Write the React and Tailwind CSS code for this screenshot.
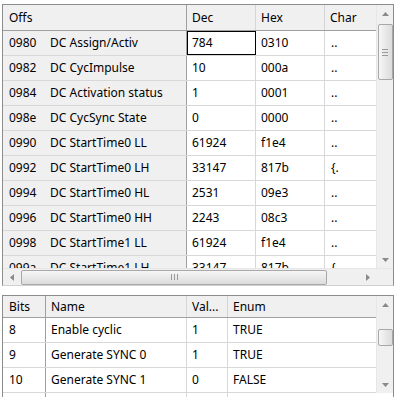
import React from "react";

const FONT = { fontFamily: '"Noto Sans", "Open Sans", sans-serif' };

const topRows = [
  ["0980", "DC Assign/Activ", "784", "0310", ".."],
  ["0982", "DC CycImpulse", "10", "000a", ".."],
  ["0984", "DC Activation status", "1", "0001", ".."],
  ["098e", "DC CycSync State", "0", "0000", ".."],
  ["0990", "DC StartTime0 LL", "61924", "f1e4", ".."],
  ["0992", "DC StartTime0 LH", "33147", "817b", "{."],
  ["0994", "DC StartTime0 HL", "2531", "09e3", ".."],
  ["0996", "DC StartTime0 HH", "2243", "08c3", ".."],
  ["0998", "DC StartTime1 LL", "61924", "f1e4", ".."],
  ["099a", "DC StartTime1 LH", "33147", "817b", "{."],
];

const botRows = [
  ["8", "Enable cyclic", "1", "TRUE"],
  ["9", "Generate SYNC 0", "1", "TRUE"],
  ["10", "Generate SYNC 1", "0", "FALSE"],
  ["11", "Reserved", "0", "FALSE"],
];

function Tri({ dir }) {
  const paths = {
    up: "M0 4 L3.5 0 L7 4 Z",
    down: "M0 0 L7 0 L3.5 4 Z",
  };
  if (dir === "left" || dir === "right") {
    return (
      <svg width="4" height="7" viewBox="0 0 4 7">
        <path d={dir === "left" ? "M4 0 L0 3.5 L4 7 Z" : "M0 0 L4 3.5 L0 7 Z"} fill="#8a8a8a" />
      </svg>
    );
  }
  return (
    <svg width="7" height="4" viewBox="0 0 7 4">
      <path d={paths[dir]} fill="#8a8a8a" />
    </svg>
  );
}

function VThumb({ h, grip }) {
  return (
    <div
      className="mx-auto w-[15px] rounded-[2px] border border-[#a8a8a8] bg-gradient-to-r from-[#f6f6f6] to-[#dcdcdc] flex flex-col items-center justify-center gap-[2px]"
      style={{ height: h }}
    >
      {grip && (
        <>
          <div className="w-[6px] h-px bg-[#9a9a9a]" />
          <div className="w-[6px] h-px bg-[#9a9a9a]" />
          <div className="w-[6px] h-px bg-[#9a9a9a]" />
        </>
      )}
    </div>
  );
}

export default function App() {
  return (
    <div className="w-[396px] h-[397px] overflow-hidden bg-white text-[12px] text-black leading-none" style={FONT}>
      {/* Top panel */}
      <div className="ml-[2px] mt-[4px] w-[392px] h-[282px] border border-[#8c8c8c] border-b-[#d0d0d0] flex flex-col">
        <div className="flex h-[263px]">
          <div className="w-[373px] overflow-hidden">
            <div className="flex h-[26px] bg-[#f0f0f0] border-b border-[#a0a0a0]">
              <div className="w-[184px] border-r border-[#a0a0a0] pl-[6px] flex items-center">Offs</div>
              <div className="w-[69px] border-r border-[#d5d5d5] pl-[5px] flex items-center">Dec</div>
              <div className="w-[69px] border-r border-[#d5d5d5] pl-[5px] flex items-center">Hex</div>
              <div className="w-[51px] pl-[5px] flex items-center">Char</div>
            </div>
            {topRows.map((r, i) => (
              <div key={i} className="flex h-[25px] border-b border-[#d8d8d8]">
                <div className="w-[184px] bg-[#f0f0f0] border-r border-[#a0a0a0] pl-[6px] flex items-center">
                  <span className="w-[41px]">{r[0]}</span>
                  <span>{r[1]}</span>
                </div>
                <div
                  className={
                    "w-[69px] border-r pl-[5px] flex items-center " +
                    (i === 0 ? "outline outline-1 outline-black -outline-offset-1 border-[#d8d8d8]" : "border-[#d8d8d8]")
                  }
                >
                  {r[2]}
                </div>
                <div className="w-[69px] border-r border-[#d8d8d8] pl-[5px] flex items-center">{r[3]}</div>
                <div className="w-[51px] pl-[6px] flex items-center">{r[4]}</div>
              </div>
            ))}
          </div>
          {/* vertical scrollbar */}
          <div className="w-[17px] bg-[#f0f0f0] flex flex-col border-l border-[#e6e6e6]">
            <div className="h-[17px] flex items-center justify-center">
              <Tri dir="up" />
            </div>
            <div className="flex-1 pt-[2px]">
              <VThumb h={56} grip />
            </div>
            <div className="h-[17px] flex items-center justify-center">
              <Tri dir="down" />
            </div>
          </div>
        </div>
        {/* horizontal scrollbar */}
        <div className="flex h-[17px] bg-[#f0f0f0] border-t border-[#e6e6e6]">
          <div className="w-[17px] flex items-center justify-center">
            <Tri dir="left" />
          </div>
          <div className="flex-1 flex items-center">
            <div className="ml-[1px] w-[306px] h-[15px] rounded-[2px] border border-[#a8a8a8] bg-gradient-to-b from-[#f6f6f6] to-[#dcdcdc] flex items-center justify-center gap-[2px]">
              <div className="h-[6px] w-px bg-[#9a9a9a]" />
              <div className="h-[6px] w-px bg-[#9a9a9a]" />
              <div className="h-[6px] w-px bg-[#9a9a9a]" />
            </div>
          </div>
          <div className="w-[17px] flex items-center justify-center">
            <Tri dir="right" />
          </div>
          <div className="w-[17px] bg-[#f0f0f0]" />
        </div>
      </div>

      {/* Bottom panel */}
      <div className="ml-[2px] mt-[9px] w-[392px] h-[120px] border border-[#8c8c8c] border-b-0 flex">
        <div className="w-[373px] overflow-hidden">
          <div className="flex h-[22px] bg-[#f0f0f0] border-b border-[#a0a0a0]">
            <div className="w-[43px] border-r border-[#a0a0a0] pl-[6px] flex items-center">Bits</div>
            <div className="w-[141px] border-r border-[#d5d5d5] pl-[5px] flex items-center">Name</div>
            <div className="w-[41px] border-r border-[#d5d5d5] pl-[5px] flex items-center">Val...</div>
            <div className="w-[148px] pl-[5px] flex items-center">Enum</div>
          </div>
          {botRows.map((r, i) => (
            <div key={i} className="flex h-[25px] border-b border-[#d8d8d8]">
              <div className="w-[43px] border-r border-[#a0a0a0] pl-[6px] flex items-center">{r[0]}</div>
              <div className="w-[141px] border-r border-[#d8d8d8] pl-[5px] flex items-center">{r[1]}</div>
              <div className="w-[41px] border-r border-[#d8d8d8] pl-[5px] flex items-center">{r[2]}</div>
              <div className="w-[148px] pl-[5px] flex items-center">{r[3]}</div>
            </div>
          ))}
        </div>
        <div className="w-[17px] h-[97px] bg-[#f0f0f0] flex flex-col border-l border-[#e6e6e6]">
          <div className="h-[17px] flex items-center justify-center">
            <Tri dir="up" />
          </div>
          <div className="flex-1 pt-[16px]">
            <VThumb h={17} />
          </div>
          <div className="h-[17px] flex items-center justify-center">
            <Tri dir="down" />
          </div>
        </div>
      </div>
    </div>
  );
}
